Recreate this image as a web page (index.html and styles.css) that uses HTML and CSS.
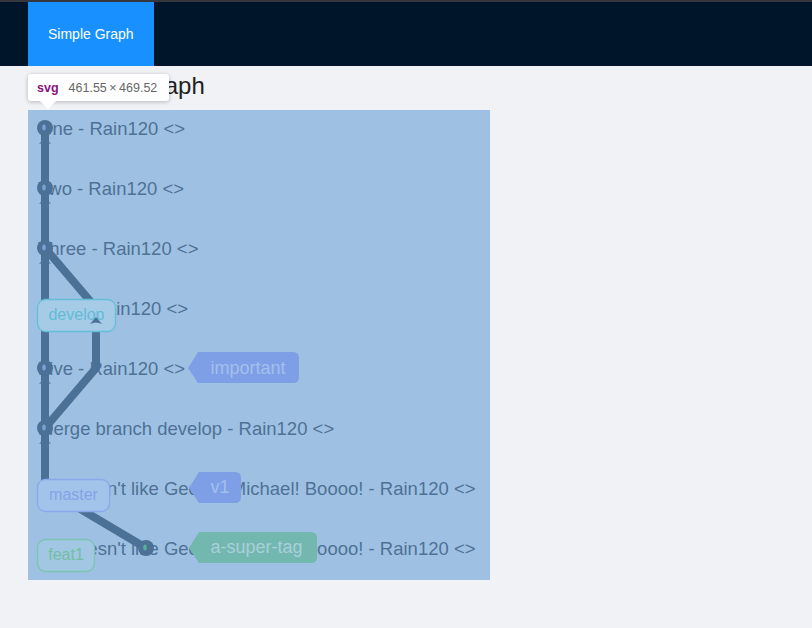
FILE: index.html
```html
<!DOCTYPE html>
<html lang="en">
<head>
  <meta charset="UTF-8" />
  <title>Simple Graph</title>
  <link rel="stylesheet" href="styles.css">
</head>
<body>
  <header class="topbar">
    <nav class="menu">
      <a class="menu-item active">Simple Graph</a>
    </nav>
  </header>

  <main class="content">
    <h2 class="title">Simple Graph</h2>

    <div class="graph-wrap">
      <svg class="graph" width="462" height="470" viewBox="0 0 462 470">
        <rect class="graph-bg" x="0" y="0" width="462" height="470" />

        <!-- commit messages -->
        <g class="msg">
          <text x="10" y="24.5">One - Rain120 &lt;&gt;</text>
          <text x="10" y="84.5">Two - Rain120 &lt;&gt;</text>
          <text x="10" y="144.5">Three - Rain120 &lt;&gt;</text>
          <text x="10" y="204.5">Four - Rain120 &lt;&gt;</text>
          <text x="10" y="264.5">Five - Rain120 &lt;&gt;</text>
          <text x="10" y="324.5">Merge branch develop - Rain120 &lt;&gt;</text>
          <text x="10" y="384.5">He doesn't like George Michael! Boooo! - Rain120 &lt;&gt;</text>
          <text x="10" y="444.5">He doesn't like George Michael! Boooo! - Rain120 &lt;&gt;</text>
        </g>

        <!-- branch paths -->
        <g class="paths">
          <path d="M17 18 V378" />
          <path d="M17 138 L68 198 V258 L17 318" />
          <path d="M17 378 L118 438" />
        </g>

        <!-- commit dots -->
        <g class="dots">
          <circle cx="17" cy="18" r="8" />
          <circle cx="17" cy="78" r="8" />
          <circle cx="17" cy="138" r="8" />
          <circle cx="68" cy="198" r="8" />
          <circle cx="17" cy="258" r="8" />
          <circle cx="17" cy="318" r="8" />
          <circle cx="17" cy="378" r="8" />
          <circle cx="118" cy="438" r="8" />
        </g>
        <g class="dot-mark">
          <ellipse cx="16" cy="17.5" rx="1.8" ry="3" />
          <ellipse cx="16" cy="77.5" rx="1.8" ry="3" />
          <ellipse cx="16" cy="137.5" rx="1.8" ry="3" />
          <ellipse cx="16" cy="257.5" rx="1.8" ry="3" />
          <ellipse cx="16" cy="317.5" rx="1.8" ry="3" />
          <ellipse cx="16" cy="377.5" rx="1.8" ry="3" />
        </g>
        <ellipse class="dot-mark-feat" cx="117" cy="437.5" rx="1.8" ry="3" />

        <!-- branch labels -->
        <g class="label label-develop">
          <rect x="9.5" y="189.5" width="78" height="32" rx="8" />
          <text x="48.5" y="209.5">develop</text>
        </g>
        <g class="label label-master">
          <rect x="9.5" y="369.5" width="72" height="32" rx="8" />
          <text x="45.5" y="389.5">master</text>
        </g>
        <g class="label label-feat">
          <rect x="9.5" y="429.5" width="57" height="32" rx="8" />
          <text x="38" y="449.5">feat1</text>
        </g>

        <!-- arrows -->
        <g class="arrows">
          <path d="M11 34 L17 27 L23 34 Q17 31 11 34 Z" />
          <path d="M11 94 L17 87 L23 94 Q17 91 11 94 Z" />
          <path d="M11 154 L17 147 L23 154 Q17 151 11 154 Z" />
          <path d="M62 214 L68 207 L74 214 Q68 211 62 214 Z" />
          <path d="M11 274 L17 267 L23 274 Q17 271 11 274 Z" />
          <path d="M11 334 L17 327 L23 334 Q17 331 11 334 Z" />
        </g>

        <!-- tags -->
        <g class="tag tag-blue">
          <path d="M160 258 L170 242 H265 Q271 242 271 248 V267 Q271 273 265 273 H170 Z" />
          <text x="182.5" y="263.5">important</text>
        </g>
        <g class="tag tag-blue">
          <path d="M161 378 L171 362 H207 Q213 362 213 368 V387 Q213 393 207 393 H171 Z" />
          <text x="182.5" y="383">v1</text>
        </g>
        <g class="tag tag-green">
          <path d="M161 438 L171 422 H283 Q289 422 289 428 V447 Q289 453 283 453 H171 Z" />
          <text x="182.5" y="443">a-super-tag</text>
        </g>
      </svg>

      <div class="inspect-tip">
        <span class="tip-tag">svg</span>
        <span class="tip-size">461.55&thinsp;×&thinsp;469.52</span>
      </div>
    </div>
  </main>
</body>
</html>
```

FILE: styles.css
```css
body {
  margin: 0;
  padding: 0;
  font-family: 'Liberation Sans', Arial, sans-serif;
  background: #f0f2f5;
  color: rgba(0, 0, 0, 0.85);
}
.topbar {
  height: 64px;
  background: #001529;
  border-top: 2px solid #34383c;
  padding: 0 28px;
}
.menu {
  display: flex;
  height: 100%;
}
.menu-item {
  display: flex;
  align-items: center;
  padding: 0 20px;
  font-size: 14px;
  color: rgba(255, 255, 255, 0.65);
  cursor: pointer;
}
.menu-item.active {
  background: #1890ff;
  color: #fff;
}
.content {
  padding: 0 28px;
}
.title {
  margin: 4px 0 8px;
  padding-left: 30px;
  font-size: 24px;
  line-height: 32px;
  font-weight: 400;
  color: #1f1f1f;
}
.graph-wrap {
  position: relative;
  width: 462px;
}
.graph {
  display: block;
}
.graph-bg {
  fill: #9ec1e3;
}
.msg text {
  font-size: 18.5px;
  fill: #4e7195;
}
.paths path {
  fill: none;
  stroke: #4b7196;
  stroke-width: 8;
}
.dots circle {
  fill: #4b7196;
}
.dot-mark ellipse {
  fill: #7c9fd6;
}
.dot-mark-feat {
  fill: #5aae95;
}
.arrows path {
  fill: #4b7196;
}
.label rect {
  stroke-width: 1.3;
}
.label text {
  font-size: 16px;
  text-anchor: middle;
}
.label-develop rect {
  fill: #a5cbe7;
  stroke: #66bdd6;
}
.label-develop text {
  fill: #62bbd6;
}
.label-master rect {
  fill: #a2c4eb;
  stroke: #8ba9ea;
}
.label-master text {
  fill: #84a3e6;
}
.label-feat rect {
  fill: #a1c7e2;
  stroke: #7cc3b1;
}
.label-feat text {
  fill: #72bea5;
}
.tag text {
  font-size: 18px;
}
.tag-blue path {
  fill: #7e9fe6;
}
.tag-blue text {
  fill: #a4bfee;
}
.tag-green path {
  fill: #72b8ae;
}
.tag-green text {
  fill: #a9cfdc;
}
.inspect-tip {
  position: absolute;
  left: 0;
  top: -36px;
  height: 27px;
  width: 141px;
  box-sizing: border-box;
  padding: 0 9px;
  display: flex;
  align-items: center;
  gap: 10px;
  background: #fff;
  border-radius: 3px;
  box-shadow: 0 1px 4px rgba(0, 0, 0, 0.25);
  font-size: 12.5px;
}
.inspect-tip::after {
  content: "";
  position: absolute;
  left: 12px;
  bottom: -8px;
  border-left: 8px solid transparent;
  border-right: 8px solid transparent;
  border-top: 8px solid #fff;
}
.tip-tag {
  color: #881280;
  font-weight: bold;
}
.tip-size {
  color: #666;
}
```
